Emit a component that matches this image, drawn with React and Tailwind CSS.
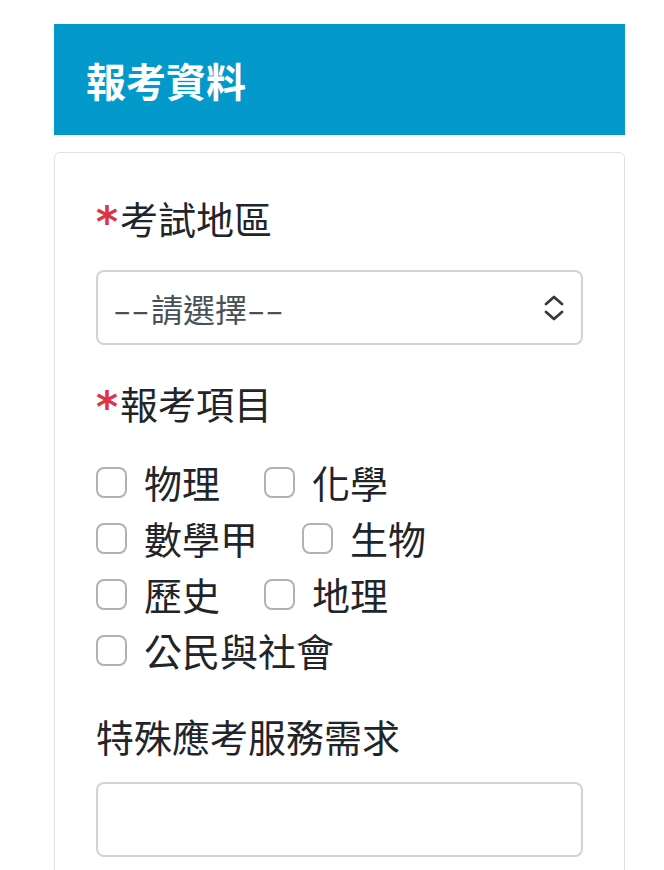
import { useState } from "react";

const subjects = ["物理", "化學", "數學甲", "生物", "歷史", "地理", "公民與社會"];

function Star() {
  return (
    <span className="inline-block w-[24px] h-[57px] align-top text-[#dc3545] text-[42px] leading-[57px] font-bold font-['DejaVu_Sans',sans-serif] translate-y-[5px]">
      *
    </span>
  );
}

function Dashes() {
  return (
    <span className="inline-block w-[38px] whitespace-nowrap">
      <span className="inline-block origin-left scale-x-[1.65]">--</span>
    </span>
  );
}

export default function App() {
  const [checked, setChecked] = useState({});

  const toggle = (s) => setChecked({ ...checked, [s]: !checked[s] });

  return (
    <div className="min-h-[870px] bg-white px-[54px] pt-[24px] pr-[39px] font-['Noto_Sans_CJK_TC','Noto_Sans',sans-serif] text-[#212529]">
      {/* Header */}
      <div className="h-[111px] bg-[#0399cb] flex items-center pl-[32px]">
        <h1 className="text-[40px] font-bold text-white leading-none">報考資料</h1>
      </div>

      {/* Card */}
      <div className="mt-[17px] border border-[#dee2e6] rounded-[6px] px-[41px] pt-[36px] pb-[40px]">
        <label className="flex h-[57px] text-[38px] leading-[57px] whitespace-nowrap">
          <Star />
          <span>考試地區</span>
        </label>
        <div className="mt-[24px] h-[75px] border-2 border-[#ced4da] rounded-[8px] flex items-center justify-between pl-[15px] pr-[14px]">
          <span className="text-[32px] text-[#495057] leading-none whitespace-nowrap">
            <Dashes />請選擇<Dashes />
          </span>
          <svg width="26" height="30" viewBox="0 0 26 30" fill="none" stroke="#343a40" strokeWidth="2.8" strokeLinecap="round" strokeLinejoin="round">
            <path d="M5 11l8-7 8 7" />
            <path d="M5 19l8 7 8-7" />
          </svg>
        </div>

        <label className="flex h-[57px] mt-[29px] text-[38px] leading-[57px] whitespace-nowrap">
          <Star />
          <span>報考項目</span>
        </label>
        <div className="mt-[23px] flex flex-wrap gap-x-[44px]">
          {subjects.map((s) => (
            <label key={s} className="inline-flex items-center h-[56px] text-[38px] cursor-pointer">
              <span
                onClick={() => toggle(s)}
                className={`w-[31px] h-[31px] rounded-[8px] border-2 border-[#b0b3b6] mr-[17px] ${checked[s] ? "bg-[#0d6efd]" : "bg-white"}`}
              ></span>
              <span className="leading-none">{s}</span>
            </label>
          ))}
        </div>

        <label className="block h-[57px] mt-[29px] text-[38px] leading-[57px]">特殊應考服務需求</label>
        <input
          type="text"
          className="mt-[18px] w-full h-[75px] border-2 border-[#ced4da] rounded-[8px] px-[15px] text-[32px] outline-none"
        />
      </div>
    </div>
  );
}
